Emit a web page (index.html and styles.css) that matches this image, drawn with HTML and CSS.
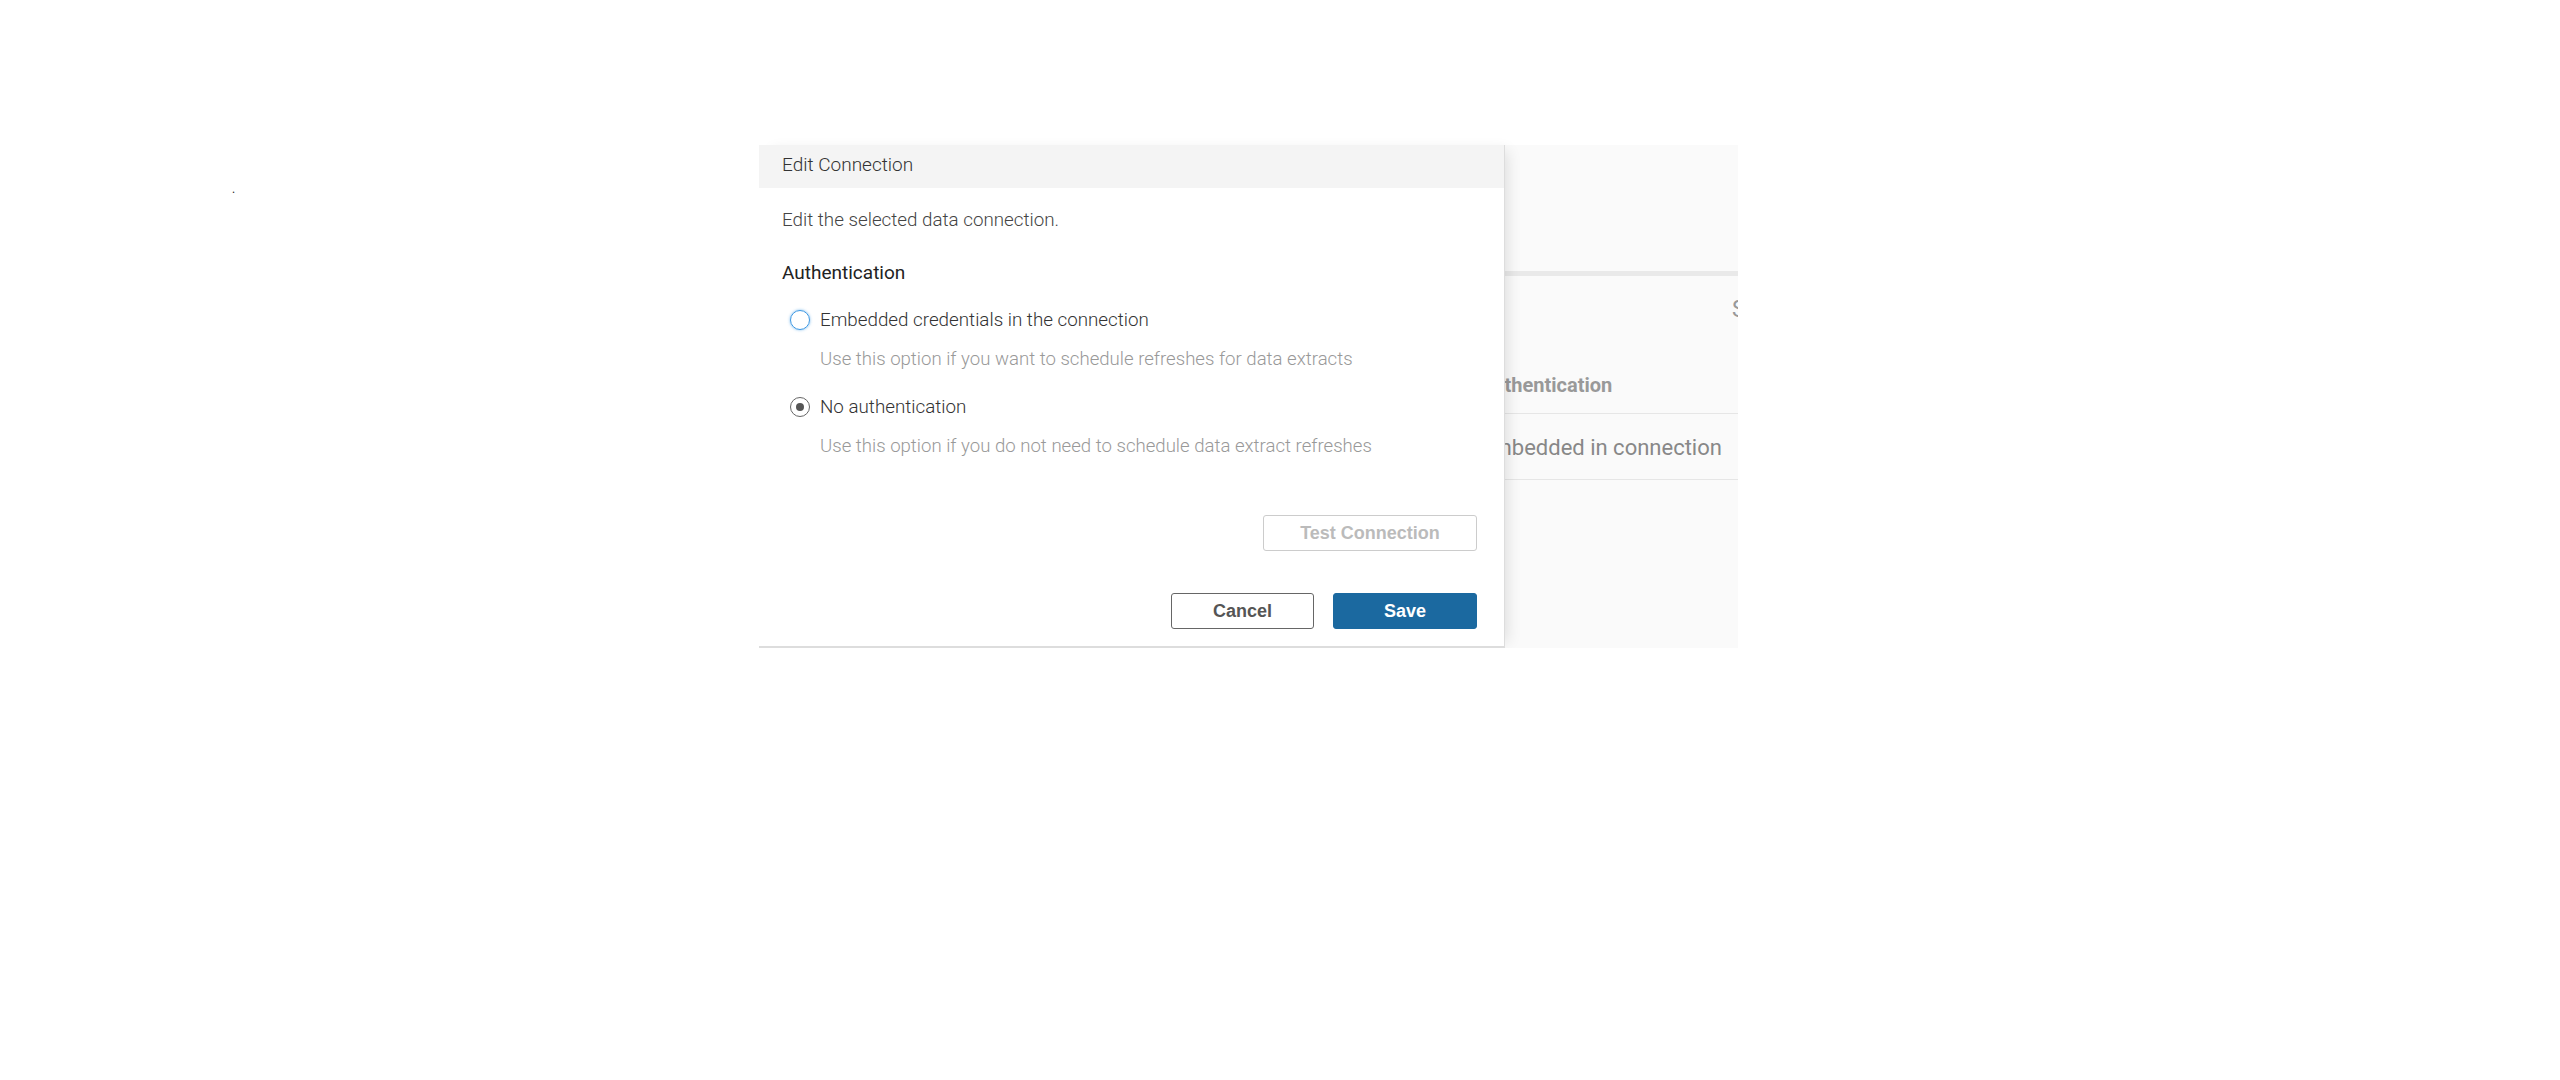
FILE: index.html
```html
<!DOCTYPE html>
<html lang="en">
<head>
    <meta charset="UTF-8">
    <meta name="viewport" content="width=device-width, initial-scale=1.0">
    <title>Edit Connection</title>
    <link rel="stylesheet" href="styles.css">
</head>
<body>
    <div class="page">
        <div class="side">
            <span class="dot">.</span>
        </div>
        <div class="stage">
            <div class="panel">
                <div class="panel-top"></div>
                <div class="panel-band"></div>
                <div class="panel-toolbar"><span>Sort by</span></div>
                <div class="panel-head"><span>Authentication</span></div>
                <div class="panel-row"><span>Embedded in connection</span></div>
            </div>

            <div class="dialog" role="dialog">
                <div class="dialog-header">Edit Connection</div>
                <div class="dialog-body">
                    <p class="intro">Edit the selected data connection.</p>
                    <h2 class="section-title">Authentication</h2>

                    <label class="option">
                        <span class="radio focus"></span>
                        <span class="option-label">Embedded credentials in the connection</span>
                    </label>
                    <p class="option-help">Use this option if you want to schedule refreshes for data extracts</p>

                    <label class="option option-second">
                        <span class="radio checked"></span>
                        <span class="option-label">No authentication</span>
                    </label>
                    <p class="option-help">Use this option if you do not need to schedule data extract refreshes</p>

                    <div class="test-row">
                        <button class="btn btn-test" disabled>Test Connection</button>
                    </div>
                    <div class="actions">
                        <button class="btn btn-cancel">Cancel</button>
                        <button class="btn btn-save">Save</button>
                    </div>
                </div>
            </div>
        </div>
    </div>
</body>
</html>
```

FILE: styles.css
```css
body {
    margin: 0;
    background-color: #fff;
    font-family: Roboto, "Liberation Sans", sans-serif;
    color: #333;
}
.page {
    display: flex;
    padding-top: 145px;
}
.side {
    width: 759px;
    flex-shrink: 0;
}
.dot {
    display: block;
    padding: 36px 0 0 232px;
    font-size: 12px;
    line-height: 16px;
    color: #222;
}
.stage {
    position: relative;
    width: 979px;
    height: 503px;
}

/* table page behind the dialog */
.panel {
    height: 100%;
    background-color: #fafafa;
    overflow: hidden;
    display: flex;
    flex-direction: column;
}
.panel-top {
    height: 126px;
}
.panel-band {
    height: 5px;
    background-color: #e9e9e9;
}
.panel-toolbar {
    height: 64px;
    padding: 20px 0 0 973px;
    font-size: 23px;
    line-height: 28px;
    color: #999;
    white-space: nowrap;
}
.panel-head {
    height: 40px;
    padding: 13px 0 0 721px;
    border-bottom: 1px solid #e6e6e6;
    font-size: 20px;
    line-height: 24px;
    font-weight: 700;
    color: #999;
    white-space: nowrap;
}
.panel-row {
    height: 45px;
    padding: 20px 0 0 721px;
    border-bottom: 1px solid #e6e6e6;
    font-size: 22px;
    line-height: 28px;
    color: #888;
    white-space: nowrap;
}

/* dialog */
.dialog {
    position: absolute;
    top: 0;
    left: 0;
    width: 745px;
    background-color: #fff;
    border-right: 1px solid #ddd;
    border-bottom: 2px solid #ddd;
    box-shadow: 8px 0 14px -6px rgba(0, 0, 0, 0.12);
}
.dialog-header {
    height: 39px;
    padding: 0 23px 4px;
    display: flex;
    align-items: center;
    background-color: #f4f4f4;
    font-size: 19px;
    font-weight: 300;
    color: #333;
}
.dialog-body {
    padding: 0 27px 17px 23px;
}
.intro {
    margin: 20px 0 0;
    font-size: 18.8px;
    line-height: 24px;
    font-weight: 300;
    color: #444;
}
.section-title {
    margin: 29px 0 0;
    font-size: 19px;
    line-height: 24px;
    font-weight: 400;
    color: #222;
}
.option {
    display: flex;
    align-items: center;
    gap: 10px;
    margin-top: 23px;
    padding-left: 8px;
    cursor: pointer;
}
.option-second {
    margin-top: 24px;
}
.option-label {
    font-size: 18.8px;
    line-height: 24px;
    font-weight: 300;
    color: #333;
}
.radio {
    width: 18px;
    height: 18px;
    border-radius: 50%;
    border: 1.5px solid #666;
    box-sizing: content-box;
    display: flex;
    align-items: center;
    justify-content: center;
    flex-shrink: 0;
}
.radio.focus {
    border-color: #3b97e3;
    box-shadow: 0 0 3px rgba(59, 151, 227, 0.7);
}
.radio.checked::after {
    content: '';
    width: 8px;
    height: 8px;
    border-radius: 50%;
    background-color: #555;
}
.option-help {
    margin: 15px 0 0 38px;
    font-size: 18.6px;
    line-height: 24px;
    font-weight: 300;
    color: #999;
}
.test-row {
    display: flex;
    justify-content: flex-end;
    margin-top: 57px;
}
.actions {
    display: flex;
    justify-content: flex-end;
    gap: 19px;
    margin-top: 42px;
}
.btn {
    height: 36px;
    border-radius: 3px;
    font-family: "Liberation Sans", Arial, sans-serif;
    font-size: 18px;
    font-weight: 700;
    cursor: pointer;
}
.btn-test {
    width: 214px;
    border: 1px solid #ccc;
    background-color: #fff;
    color: #bbb;
    cursor: default;
}
.btn-cancel {
    width: 143px;
    border: 1px solid #666;
    background-color: #fff;
    color: #555;
}
.btn-save {
    width: 144px;
    border: 1px solid #1b69a0;
    background-color: #1b69a0;
    color: #fff;
}
```
